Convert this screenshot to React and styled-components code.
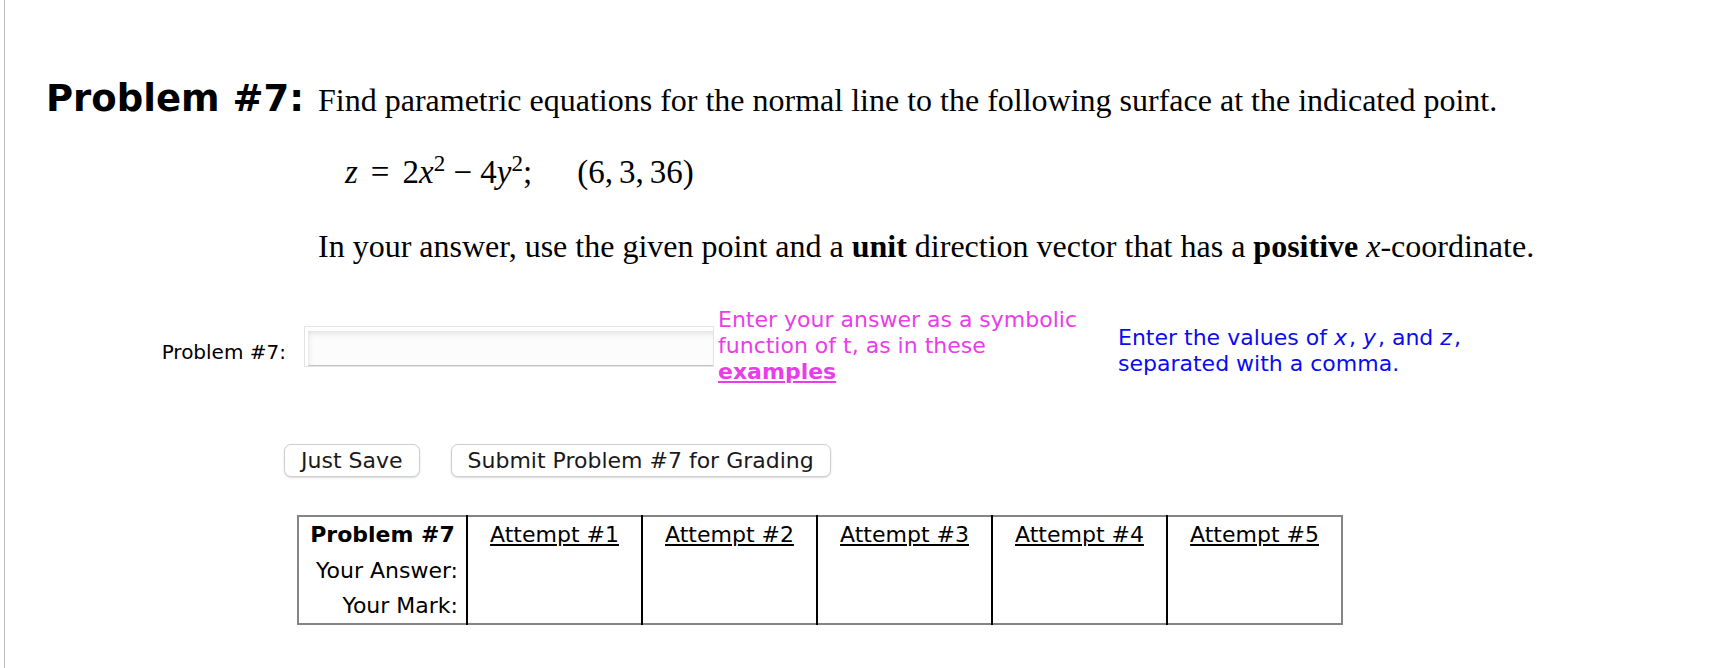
import React from 'react'
import styled, { createGlobalStyle } from 'styled-components'

const GlobalStyle = createGlobalStyle`
  html, body {
    margin: 0;
    padding: 0;
    background: #fff;
  }
  body {
    font-family: "DejaVu Sans", Verdana, sans-serif;
    color: #000;
  }
`

const Page = styled.div`
  margin-left: 4px;
  border-left: 1px solid #bdbdbd;
  min-height: 668px;
  box-sizing: border-box;
  padding: 79px 0 0 41px;
`

const ProblemHead = styled.div`
  display: flex;
  align-items: baseline;
`

const Title = styled.h2`
  margin: 0;
  width: 272px;
  flex-shrink: 0;
  font-size: 37px;
  line-height: 40px;
  font-weight: 700;
  white-space: nowrap;
`

const Statement = styled.div`
  display: flex;
  flex-direction: column;
  font-family: "Liberation Serif", "Times New Roman", serif;
  font-size: 32px;
  line-height: 40px;
  p {
    margin: 0;
    white-space: nowrap;
  }
`

const Equation = styled.p`
  && {
    margin-top: 32px;
    padding-left: 27px;
    font-size: 33px;
  }
`

const Instruction = styled.p`
  && {
    margin-top: 34px;
  }
`

const Var = styled.i``

const Sup = styled.sup`
  font-size: 0.7em;
  line-height: 0;
  vertical-align: 0.5em;
`

const Sp = styled.span`
  display: inline-block;
  width: ${p => p.w}px;
`

const AnswerRow = styled.div`
  display: flex;
  align-items: center;
  margin-top: 41px;
`

const Label = styled.div`
  width: 240px;
  padding: 11px 4px 0 0;
  text-align: right;
  font-size: 20px;
  line-height: 24px;
`

const InputFrame = styled.div`
  margin-left: 14px;
  width: 410px;
  height: 41px;
  box-sizing: border-box;
  border: 1px solid #e4e4e4;
  padding: 4px 0 0 3px;
  display: flex;
`

const AnswerInput = styled.input`
  flex: 1;
  border: none;
  border-bottom: 1px solid #c4c4c4;
  background: #fcfcfc;
  box-shadow: inset 2px 4px 6px -2px rgba(0, 0, 0, 0.12);
  outline: none;
  margin: 0;
  padding: 0;
`

const Hint = styled.div`
  width: ${p => p.w}px;
  margin-left: ${p => p.gap}px;
  padding-top: ${p => p.drop || 0}px;
  color: ${p => p.color};
  font-size: 22px;
  line-height: 26px;
  i {
    padding-right: 2px;
  }
  a {
    color: inherit;
    font-weight: 700;
    text-decoration: underline;
  }
`

const ButtonRow = styled.div`
  display: flex;
  gap: 31px;
  margin: 59px 0 0 238px;
`

const Button = styled.button`
  height: 33px;
  padding: 0 16px;
  font-family: "DejaVu Sans", Verdana, sans-serif;
  font-size: 22px;
  color: #1a1a1a;
  background: #fff;
  border: 1px solid #cfcfcf;
  border-radius: 7px;
  box-shadow: 0 1px 2px rgba(0, 0, 0, 0.15);
`

const Attempts = styled.table`
  margin: 38px 0 0 251px;
  border-collapse: collapse;
  border: 2px solid #858585;
  font-size: 22px;
`

const Cell = styled.td`
  height: 36px;
  padding: 0 8px;
  box-sizing: border-box;
  border-left: ${p => (p.first ? 'none' : '2px solid #000')};
  width: ${p => (p.first ? 169 : 175)}px;
  text-align: ${p => p.align || 'center'};
  font-weight: ${p => (p.bold ? 700 : 400)};
  vertical-align: middle;
  white-space: nowrap;
  a {
    color: #000;
    text-decoration: underline;
  }
`

const attempts = [1, 2, 3, 4, 5]

export default function App() {
  return (
    <>
      <GlobalStyle />
      <Page>
        <ProblemHead>
          <Title>Problem #7:</Title>
          <Statement>
            <p>Find parametric equations for the normal line to the following surface at the indicated point.</p>
            <Equation>
              <Var>z</Var>
              <Sp w={13} />=<Sp w={13} />2<Var>x</Var>
              <Sup>2</Sup> − 4<Var>y</Var>
              <Sup>2</Sup>;<Sp w={45} />(6,<Sp w={6} />3,<Sp w={6} />36)
            </Equation>
            <Instruction>
              In your answer, use the given point and a <b>unit</b> direction vector that has a{' '}
              <b>positive</b> <i>x</i>-coordinate.
            </Instruction>
          </Statement>
        </ProblemHead>

        <AnswerRow>
          <Label>Problem #7:</Label>
          <InputFrame>
            <AnswerInput type="text" aria-label="answer" />
          </InputFrame>
          <Hint w={372} gap={4} color="#e93de9">
            Enter your answer as a symbolic function of t, as in these <a href="#">examples</a>
          </Hint>
          <Hint w={380} gap={28} drop={10} color="#0b0bf0">
            Enter the values of <i>x</i>, <i>y</i>, and <i>z</i>, separated with a comma.
          </Hint>
        </AnswerRow>

        <ButtonRow>
          <Button>Just Save</Button>
          <Button>Submit Problem #7 for Grading</Button>
        </ButtonRow>

        <Attempts>
          <tbody>
            <tr>
              <Cell first bold>Problem #7</Cell>
              {attempts.map(n => (
                <Cell key={n}><a href="#">Attempt #{n}</a></Cell>
              ))}
            </tr>
            <tr>
              <Cell first align="right">Your Answer:</Cell>
              {attempts.map(n => <Cell key={n} />)}
            </tr>
            <tr>
              <Cell first align="right">Your Mark:</Cell>
              {attempts.map(n => <Cell key={n} />)}
            </tr>
          </tbody>
        </Attempts>
      </Page>
    </>
  )
}
